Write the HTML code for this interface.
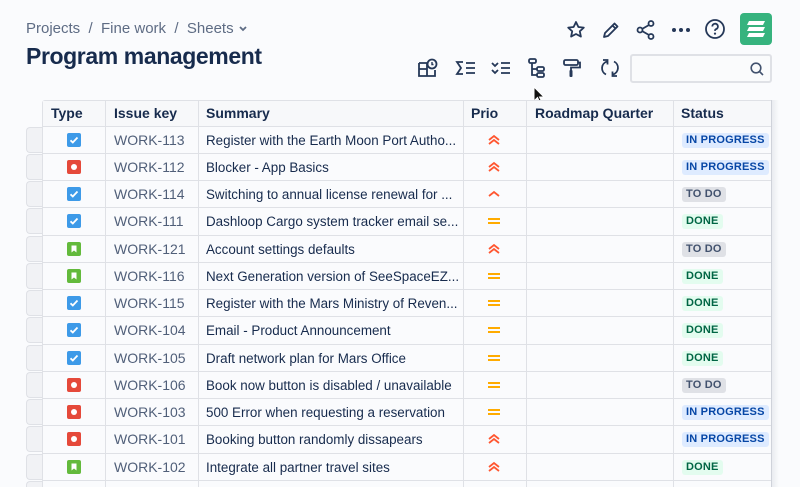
<!DOCTYPE html>
<html style="height:487px;overflow:hidden"><head><meta charset="utf-8"><style>
*{margin:0;padding:0;box-sizing:border-box}
body{width:800px;height:487px;overflow:hidden;background:#fafbfd;font-family:"Liberation Sans",sans-serif;position:relative;color:#172b4d}
.a{position:absolute}
.crumb{left:26px;top:20px;font-size:15px;color:#5e6c84;white-space:nowrap}
.title{left:26px;top:43px;font-size:23px;font-weight:bold;color:#172b4d;letter-spacing:-0.4px}
.grid{left:42px;top:100px;width:729px;height:400px;border-left:1px solid #dfe1e6;border-top:1px solid #dfe1e6;border-radius:3px 0 0 0}
.hd{top:100px;height:27px;font-size:14px;font-weight:bold;line-height:27px;color:#172b4d}
.vl{top:100px;width:1px;height:400px;background:#dfe1e6}
.hl{left:42px;width:729px;height:1px;background:#dfe1e6}
.num{left:26px;width:16px;height:26px;background:#f1f2f5;border:1px solid #dfe1e6;border-right:none;border-radius:4px 0 0 4px}
.row{left:0;height:27px;width:800px;font-size:13.4px;line-height:27px;overflow:hidden}
.row span{position:absolute;white-space:nowrap}
.k{left:114px;color:#505f79;font-size:14px}
.s{left:206px;color:#172b4d}
.lz{position:absolute;top:6px;font-size:11px;font-weight:bold;line-height:15px;padding:0 4px;border-radius:3px;left:682px;letter-spacing:0.2px}
.ip{background:#deebff;color:#0747a6}
.td{background:#dfe1e6;color:#42526e}
.dn{background:#e3fcef;color:#006644}
.shadow{left:771px;top:100px;width:8px;height:400px;background:linear-gradient(to right,rgba(9,30,66,.08),rgba(9,30,66,0))}
</style></head><body>
<div class="a crumb">Projects &nbsp;/&nbsp; Fine work &nbsp;/&nbsp; Sheets <svg width="10" height="8" viewBox="0 0 10 8"><path d="M2 2l3 3 3-3" stroke="#5e6c84" stroke-width="1.8" fill="none"/></svg></div>
<div class="a title">Program management</div>

<svg class="a" style="left:565px;top:19px" width="22" height="22" viewBox="0 0 22 22"><path d="M11 3l2.4 5 5.4.6-4 3.7 1.1 5.3L11 15l-4.9 2.6 1.1-5.3-4-3.7 5.4-.6z" fill="none" stroke="#253858" stroke-width="1.8" stroke-linejoin="round"/></svg>
<svg class="a" style="left:600px;top:19px" width="22" height="22" viewBox="0 0 22 22"><path d="M4 18l1-4L14.5 4.5l3 3L8 17z M12.5 6.5l3 3" fill="none" stroke="#253858" stroke-width="1.8" stroke-linejoin="round"/></svg>
<svg class="a" style="left:635px;top:19px" width="22" height="22" viewBox="0 0 22 22"><circle cx="5" cy="11" r="2.5" fill="none" stroke="#253858" stroke-width="1.8"/><circle cx="16" cy="4.5" r="2.5" fill="none" stroke="#253858" stroke-width="1.8"/><circle cx="16" cy="17.5" r="2.5" fill="none" stroke="#253858" stroke-width="1.8"/><path d="M7 10l7-4M7 12l7 4" stroke="#253858" stroke-width="1.8"/></svg>
<svg class="a" style="left:670px;top:19px" width="22" height="22" viewBox="0 0 22 22"><circle cx="4" cy="11" r="2" fill="#253858"/><circle cx="11" cy="11" r="2" fill="#253858"/><circle cx="18" cy="11" r="2" fill="#253858"/></svg>
<svg class="a" style="left:704px;top:18px" width="22" height="22" viewBox="0 0 22 22"><circle cx="11" cy="11" r="9" fill="none" stroke="#253858" stroke-width="1.8"/><path d="M8.3 8.5a2.8 2.8 0 1 1 3.8 2.6c-.8.4-1.1.9-1.1 1.8" fill="none" stroke="#253858" stroke-width="1.8"/><circle cx="11" cy="15.6" r="1.1" fill="#253858"/></svg>
<div class="a" style="left:740px;top:13px;width:32px;height:32px;background:#36b37e;border-radius:4px"></div>
<svg class="a" style="left:740px;top:13px" width="32" height="32" viewBox="0 0 32 32"><path d="M9 8h16l-2 4H7zM9 14h16l-2 4H7zM9 20h16l-2 4H7z" fill="#fff"/></svg>

<svg class="a" style="left:417px;top:57px" width="22" height="22" viewBox="0 0 22 22"><path d="M2 6h8M2 6v13h16v-6M2 12h8M10 12v7M10 6v6" fill="none" stroke="#253858" stroke-width="1.8"/><circle cx="15" cy="7" r="4.5" fill="none" stroke="#253858" stroke-width="1.8"/><path d="M15 5v2.5h1.5" fill="none" stroke="#253858" stroke-width="1.4"/></svg>
<svg class="a" style="left:455px;top:58px" width="22" height="20" viewBox="0 0 22 20"><path d="M8 4H2l4 6-4 6h6" fill="none" stroke="#253858" stroke-width="1.8"/><path d="M11 5h9M11 10h9M11 15h9" stroke="#253858" stroke-width="1.8"/></svg>
<svg class="a" style="left:490px;top:58px" width="22" height="20" viewBox="0 0 22 20"><path d="M2 5l3 3 3-3M2 12l3 3 3-3" fill="none" stroke="#253858" stroke-width="1.8"/><path d="M11 5h9M11 10h9M11 15h9" stroke="#253858" stroke-width="1.8"/></svg>
<svg class="a" style="left:527px;top:57px" width="20" height="22" viewBox="0 0 20 22"><rect x="2" y="2" width="7" height="4" rx="1.5" fill="none" stroke="#253858" stroke-width="1.8"/><path d="M5 6v12h5M5 12h5" fill="none" stroke="#253858" stroke-width="1.8"/><rect x="10" y="10" width="7" height="4" rx="1.5" fill="none" stroke="#253858" stroke-width="1.8"/><rect x="10" y="16" width="7" height="4" rx="1.5" fill="none" stroke="#253858" stroke-width="1.8"/></svg>
<svg class="a" style="left:562px;top:57px" width="20" height="22" viewBox="0 0 20 22"><rect x="2" y="3" width="14" height="5" rx="1.5" fill="none" stroke="#253858" stroke-width="1.8"/><path d="M16 5.5h2v5H9v3" fill="none" stroke="#253858" stroke-width="1.8"/><rect x="7.5" y="13" width="3" height="7" rx="1" fill="#253858"/></svg>
<svg class="a" style="left:599px;top:57px" width="22" height="22" viewBox="0 0 22 22"><path d="M8 4.5A7 7 0 0 0 7 17.5M14 17.5A7 7 0 0 0 15 4.5" fill="none" stroke="#253858" stroke-width="1.8"/><path d="M4 3h4.5v4.5M18 19h-4.5v-4.5" fill="none" stroke="#253858" stroke-width="1.8"/></svg>
<div class="a" style="left:630px;top:54px;width:142px;height:29px;border:2px solid #dfe1e6;border-radius:3px;background:#fafbfc"></div>
<svg class="a" style="left:749px;top:61px" width="16" height="16" viewBox="0 0 16 16"><circle cx="7" cy="7" r="4.8" fill="none" stroke="#42526e" stroke-width="1.6"/><path d="M10.5 10.5L14 14" stroke="#42526e" stroke-width="1.6"/></svg>
<svg class="a" style="left:533px;top:86px" width="12" height="18" viewBox="0 0 12 18"><path d="M1 1v14l3.5-3.5 2.5 5.5 2-1-2.5-5H11z" fill="#111" stroke="#fff" stroke-width="1"/></svg>

<div class="a grid"></div>
<div class="a" style="left:43px;top:101px;width:728px;height:26px;background:#f7f8fa"></div>
<div class="a vl" style="left:105px"></div>
<div class="a vl" style="left:198px"></div>
<div class="a vl" style="left:463px"></div>
<div class="a vl" style="left:526px"></div>
<div class="a vl" style="left:673px"></div>
<div class="a vl" style="left:771px"></div>
<div class="a shadow"></div>
<div class="a hd" style="left:51px">Type</div>
<div class="a hd" style="left:114px">Issue key</div>
<div class="a hd" style="left:206px">Summary</div>
<div class="a hd" style="left:471px">Prio</div>
<div class="a hd" style="left:535px">Roadmap Quarter</div>
<div class="a hd" style="left:681px">Status</div>

<div class="a hl" style="top:126px"></div><div class="a hl" style="top:153px"></div><div class="a hl" style="top:180px"></div><div class="a hl" style="top:207px"></div><div class="a hl" style="top:235px"></div><div class="a hl" style="top:262px"></div><div class="a hl" style="top:289px"></div><div class="a hl" style="top:316px"></div><div class="a hl" style="top:344px"></div><div class="a hl" style="top:371px"></div><div class="a hl" style="top:398px"></div><div class="a hl" style="top:425px"></div><div class="a hl" style="top:453px"></div><div class="a hl" style="top:480px"></div>

<svg width="0" height="0" style="position:absolute"><defs>
<symbol id="hh" viewBox="0 0 14 12"><path d="M2 6l5-4 5 4M2 10l5-4 5 4" fill="none" stroke="#ff5630" stroke-width="1.8"/></symbol>
<symbol id="h" viewBox="0 0 14 12"><path d="M2 8l5-4 5 4" fill="none" stroke="#ff5630" stroke-width="1.8"/></symbol>
<symbol id="m" viewBox="0 0 14 12"><path d="M1 4h12M1 8h12" stroke="#ffab00" stroke-width="2"/></symbol>
<symbol id="tk" viewBox="0 0 14 14"><rect width="14" height="14" rx="2" fill="#3d9ae8"/><path d="M3.5 7.3l2.3 2.2 4.7-5" fill="none" stroke="#fff" stroke-width="1.8"/></symbol>
<symbol id="bg" viewBox="0 0 14 14"><rect width="14" height="14" rx="2" fill="#e5493a"/><circle cx="7" cy="7" r="3" fill="#fff"/></symbol>
<symbol id="st" viewBox="0 0 14 14"><rect width="14" height="14" rx="2" fill="#63ba3c"/><path d="M4.5 3.5h5v7L7 8.5 4.5 10.5z" fill="#fff"/></symbol>
</defs></svg>

<div class="a row" style="top:127px"><div class="a num" style="top:0"></div><svg class="a" style="left:67px;top:6px" width="14" height="14"><use href="#tk"/></svg><span class="k">WORK-113</span><span class="s">Register with the Earth Moon Port Autho...</span><svg class="a" style="left:487px;top:7px" width="14" height="12"><use href="#hh"/></svg><span class="lz ip">IN PROGRESS</span></div>
<div class="a row" style="top:154px"><div class="a num" style="top:0"></div><svg class="a" style="left:67px;top:6px" width="14" height="14"><use href="#bg"/></svg><span class="k">WORK-112</span><span class="s">Blocker - App Basics</span><svg class="a" style="left:487px;top:7px" width="14" height="12"><use href="#hh"/></svg><span class="lz ip">IN PROGRESS</span></div>
<div class="a row" style="top:181px"><div class="a num" style="top:0"></div><svg class="a" style="left:67px;top:6px" width="14" height="14"><use href="#tk"/></svg><span class="k">WORK-114</span><span class="s">Switching to annual license renewal for ...</span><svg class="a" style="left:487px;top:7px" width="14" height="12"><use href="#h"/></svg><span class="lz td">TO DO</span></div>
<div class="a row" style="top:208px"><div class="a num" style="top:0"></div><svg class="a" style="left:67px;top:6px" width="14" height="14"><use href="#tk"/></svg><span class="k">WORK-111</span><span class="s">Dashloop Cargo system tracker email se...</span><svg class="a" style="left:487px;top:7px" width="14" height="12"><use href="#m"/></svg><span class="lz dn">DONE</span></div>
<div class="a row" style="top:236px"><div class="a num" style="top:0"></div><svg class="a" style="left:67px;top:6px" width="14" height="14"><use href="#st"/></svg><span class="k">WORK-121</span><span class="s">Account settings defaults</span><svg class="a" style="left:487px;top:7px" width="14" height="12"><use href="#hh"/></svg><span class="lz td">TO DO</span></div>
<div class="a row" style="top:263px"><div class="a num" style="top:0"></div><svg class="a" style="left:67px;top:6px" width="14" height="14"><use href="#st"/></svg><span class="k">WORK-116</span><span class="s">Next Generation version of SeeSpaceEZ...</span><svg class="a" style="left:487px;top:7px" width="14" height="12"><use href="#m"/></svg><span class="lz dn">DONE</span></div>
<div class="a row" style="top:290px"><div class="a num" style="top:0"></div><svg class="a" style="left:67px;top:6px" width="14" height="14"><use href="#tk"/></svg><span class="k">WORK-115</span><span class="s">Register with the Mars Ministry of Reven...</span><svg class="a" style="left:487px;top:7px" width="14" height="12"><use href="#m"/></svg><span class="lz dn">DONE</span></div>
<div class="a row" style="top:317px"><div class="a num" style="top:0"></div><svg class="a" style="left:67px;top:6px" width="14" height="14"><use href="#tk"/></svg><span class="k">WORK-104</span><span class="s">Email - Product Announcement</span><svg class="a" style="left:487px;top:7px" width="14" height="12"><use href="#m"/></svg><span class="lz dn">DONE</span></div>
<div class="a row" style="top:345px"><div class="a num" style="top:0"></div><svg class="a" style="left:67px;top:6px" width="14" height="14"><use href="#tk"/></svg><span class="k">WORK-105</span><span class="s">Draft network plan for Mars Office</span><svg class="a" style="left:487px;top:7px" width="14" height="12"><use href="#m"/></svg><span class="lz dn">DONE</span></div>
<div class="a row" style="top:372px"><div class="a num" style="top:0"></div><svg class="a" style="left:67px;top:6px" width="14" height="14"><use href="#bg"/></svg><span class="k">WORK-106</span><span class="s">Book now button is disabled / unavailable</span><svg class="a" style="left:487px;top:7px" width="14" height="12"><use href="#m"/></svg><span class="lz td">TO DO</span></div>
<div class="a row" style="top:399px"><div class="a num" style="top:0"></div><svg class="a" style="left:67px;top:6px" width="14" height="14"><use href="#bg"/></svg><span class="k">WORK-103</span><span class="s">500 Error when requesting a reservation</span><svg class="a" style="left:487px;top:7px" width="14" height="12"><use href="#m"/></svg><span class="lz ip">IN PROGRESS</span></div>
<div class="a row" style="top:426px"><div class="a num" style="top:0"></div><svg class="a" style="left:67px;top:6px" width="14" height="14"><use href="#bg"/></svg><span class="k">WORK-101</span><span class="s">Booking button randomly dissapears</span><svg class="a" style="left:487px;top:7px" width="14" height="12"><use href="#hh"/></svg><span class="lz ip">IN PROGRESS</span></div>
<div class="a row" style="top:454px"><div class="a num" style="top:0"></div><svg class="a" style="left:67px;top:6px" width="14" height="14"><use href="#st"/></svg><span class="k">WORK-102</span><span class="s">Integrate all partner travel sites</span><svg class="a" style="left:487px;top:7px" width="14" height="12"><use href="#hh"/></svg><span class="lz dn">DONE</span></div>
<div class="a row" style="top:481px;height:6px"><div class="a num" style="top:0"></div></div>
</body></html>
